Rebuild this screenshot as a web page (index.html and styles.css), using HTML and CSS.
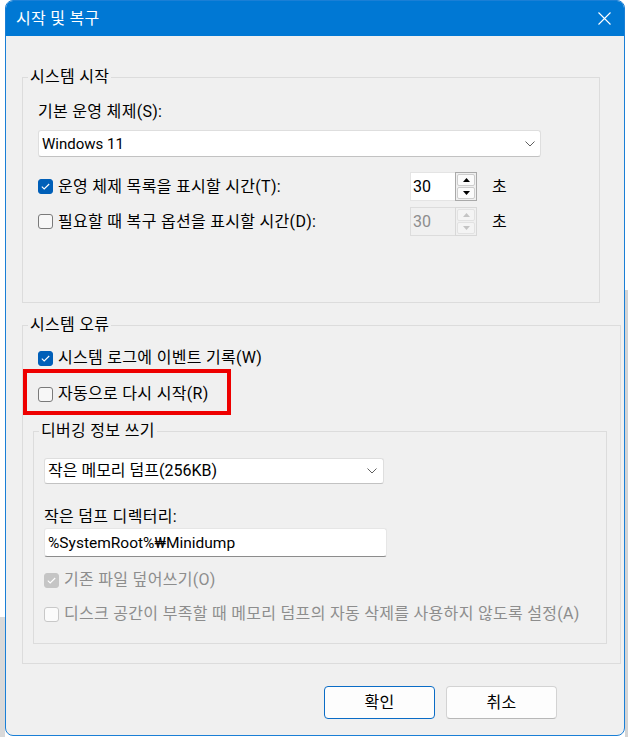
FILE: index.html
```html
<!DOCTYPE html>
<html lang="ko">
<head>
<meta charset="utf-8">
<title>시작 및 복구</title>
<link rel="stylesheet" href="styles.css">
</head>
<body>
<div class="window">
  <div class="titlebar">
    <span class="title">시작 및 복구</span>
    <svg class="close" width="13" height="13" viewBox="0 0 13 13"><path d="M0.5 0.5 L12.5 12.5 M12.5 0.5 L0.5 12.5" stroke="#fff" stroke-width="1.1" fill="none"/></svg>
  </div>

  <div class="content">
    <fieldset class="group g1">
      <legend>시스템 시작</legend>
      <div class="gbody g1-body">
        <div class="label first-label">기본 운영 체제(S):</div>
        <div class="select sel1">
          <span class="latin">Windows 11</span>
          <svg width="10" height="6" viewBox="0 0 10 6"><path d="M0.5 0.5 L5 5 L9.5 0.5" stroke="#5f5f5f" stroke-width="1" fill="none"/></svg>
        </div>
        <div class="timerow tr1">
          <div class="check">
            <span class="box checked"><svg width="15" height="15" viewBox="0 0 15 15"><path d="M3.8 7.6 L6.2 10 L11.2 5" stroke="#fff" stroke-width="1.1" fill="none"/></svg></span>
            <span>운영 체제 목록을 표시할 시간(T):</span>
          </div>
          <div class="spin">
            <span class="spin-val">30</span>
            <div class="spin-btns">
              <div class="sb"><svg width="7" height="4" viewBox="0 0 7 4"><path d="M0 4 L3.5 0 L7 4Z" fill="#000"/></svg></div>
              <div class="sb"><svg width="7" height="4" viewBox="0 0 7 4"><path d="M0 0 L7 0 L3.5 4Z" fill="#000"/></svg></div>
            </div>
          </div>
          <span class="unit">초</span>
        </div>
        <div class="timerow tr2">
          <div class="check">
            <span class="box"></span>
            <span>필요할 때 복구 옵션을 표시할 시간(D):</span>
          </div>
          <div class="spin disabled">
            <span class="spin-val">30</span>
            <div class="spin-btns">
              <div class="sb"><svg width="7" height="4" viewBox="0 0 7 4"><path d="M0 4 L3.5 0 L7 4Z" fill="#c4c4c4"/></svg></div>
              <div class="sb"><svg width="7" height="4" viewBox="0 0 7 4"><path d="M0 0 L7 0 L3.5 4Z" fill="#c4c4c4"/></svg></div>
            </div>
          </div>
          <span class="unit">초</span>
        </div>
      </div>
    </fieldset>

    <fieldset class="group g2">
      <legend>시스템 오류</legend>
      <div class="gbody g2-body">
        <div class="check row rw">
          <span class="box checked"><svg width="15" height="15" viewBox="0 0 15 15"><path d="M3.8 7.6 L6.2 10 L11.2 5" stroke="#fff" stroke-width="1.1" fill="none"/></svg></span>
          <span>시스템 로그에 이벤트 기록(W)</span>
        </div>
        <div class="check row rr">
          <span class="box"></span>
          <span>자동으로 다시 시작(R)</span>
          <span class="highlight"></span>
        </div>

        <fieldset class="group g3">
          <legend>디버깅 정보 쓰기</legend>
          <div class="gbody g3-body">
            <div class="select sel2">
              <span>작은 메모리 덤프(256KB)</span>
              <svg width="10" height="6" viewBox="0 0 10 6"><path d="M0.5 0.5 L5 5 L9.5 0.5" stroke="#5f5f5f" stroke-width="1" fill="none"/></svg>
            </div>
            <div class="label dir-label">작은 덤프 디렉터리:</div>
            <div class="textin">%SystemRoot%₩Minidump</div>
            <div class="check row ro disabled">
              <span class="box checked"><svg width="15" height="15" viewBox="0 0 15 15"><path d="M3.8 7.6 L6.2 10 L11.2 5" stroke="#fff" stroke-width="1.1" fill="none"/></svg></span>
              <span>기존 파일 덮어쓰기(O)</span>
            </div>
            <div class="check row ra disabled">
              <span class="box"></span>
              <span>디스크 공간이 부족할 때 메모리 덤프의 자동 삭제를 사용하지 않도록 설정(A)</span>
            </div>
          </div>
        </fieldset>
      </div>
    </fieldset>

    <div class="buttons">
      <div class="btn primary">확인</div>
      <div class="btn">취소</div>
    </div>
  </div>
</div>
</body>
</html>
```

FILE: styles.css
```css
* { box-sizing: border-box; }
html, body { margin: 0; padding: 0; }
body {
  width: 628px;
  height: 737px;
  overflow: hidden;
  font-family: Roboto, "Noto Sans CJK KR", sans-serif;
  font-size: 16px;
  line-height: 20px;
  letter-spacing: 0.3px;
  color: #000;
  background:
    linear-gradient(#d4d4d4, #d4d4d4) right 0 top 290px / 3px 100% no-repeat,
    linear-gradient(#d9d9d9, #d9d9d9) left 0 top 617px / 5px 100% no-repeat,
    #ffffff;
}

.window {
  margin-left: 5px;
  width: 620px;
  height: 736px;
  border: 1px solid #1a7fd6;
  border-radius: 8px;
  background: #f0f0f0;
  overflow: hidden;
  display: flex;
  flex-direction: column;
}

.titlebar {
  height: 35px;
  flex: none;
  background: #0078d4;
  color: #fff;
  display: flex;
  align-items: center;
  justify-content: space-between;
  padding: 0 13px 0 10px;
}
.close { display: block; }

.content {
  padding-left: 16px;
}

.group {
  margin: 0;
  padding: 0;
  border: 1px solid #dcdcdc;
  min-inline-size: 0;
}
.group legend {
  padding: 0 2px;
  margin-left: 5px;
  line-height: 20px;
}

.g1 { margin-top: 31px; width: 578px; }
.g1-body { padding: 15px 0 66px 15px; }

.label { height: 20px; white-space: nowrap; }

.select {
  display: flex;
  align-items: center;
  justify-content: space-between;
  background: #fff;
  border: 1px solid #dedede;
  border-bottom-color: #c2c2c2;
  border-radius: 3px;
  white-space: nowrap;
}
.select svg { display: block; }
.sel1 { margin-top: 8px; width: 503px; height: 27px; padding: 0 5px 0 3px; }
.latin { font-size: 15px; letter-spacing: 0; }

.timerow {
  display: grid;
  grid-template-columns: 372px 67px auto;
  align-items: center;
  height: 29px;
}
.tr1 { margin-top: 15px; }
.tr2 { margin-top: 6px; }
.unit { margin-left: 15px; }

.check {
  display: flex;
  align-items: center;
  gap: 5px;
  white-space: nowrap;
}
.row { height: 20px; }

.box {
  flex: none;
  width: 15px;
  height: 15px;
  border-radius: 3px;
  border: 1px solid #7a7a7a;
  background: #f7f7f7;
  display: block;
  position: relative;
}
.box svg { position: absolute; left: -1px; top: -1px; }
.box.checked { background: #005fb8; border-color: #005fb8; }
.disabled { color: #8d8d8d; }
.disabled .box { border-color: #c8c8c8; background: #fbfbfb; }
.disabled .box.checked { background: #c5c5c5; border-color: #c5c5c5; }

.spin {
  display: flex;
  height: 29px;
  width: 67px;
}
.spin-val {
  flex: 1;
  background: #fff;
  border: 1px solid #e4e4e4;
  border-right: 0;
  padding-left: 2px;
  display: flex;
  align-items: center;
  letter-spacing: 0;
}
.spin-btns {
  width: 22px;
  border: 1px solid #a9a9a9;
  background: #f0f0f0;
  display: flex;
  flex-direction: column;
  gap: 1px;
  padding: 1px;
}
.sb {
  flex: 1;
  background: #fbfbfb;
  border: 1px solid #cdcdcd;
  border-radius: 2px;
  display: flex;
  align-items: center;
  justify-content: center;
}
.sb svg { display: block; }
.spin.disabled .spin-val { background: #f0f0f0; border-color: #dcdcdc; }
.spin.disabled .spin-btns { border-color: #d8d8d8; }
.spin.disabled .sb { background: #f4f4f4; border-color: #e2e2e2; }

.g2 { margin-top: 12px; width: 599px; }
.g2-body { padding: 13px 0 19px 10px; }
.g2-body > .row { margin-left: 5px; }
.rr { margin-top: 16px; position: relative; }
.highlight {
  position: absolute;
  left: -15px;
  top: -15px;
  width: 208px;
  height: 46px;
  border: 4px solid #ee0000;
}

.g3 { margin-top: 17px; width: 574px; }
.g3-body { padding: 17px 0 19px 10px; }
.sel2 { width: 340px; height: 26px; padding: 0 6px 0 3px; letter-spacing: 0; }
.dir-label { margin-top: 23px; }
.textin {
  margin-top: 1px;
  width: 343px;
  height: 29px;
  background: #fff;
  border: 1px solid #e6e6e6;
  border-bottom-color: #8c8c8c;
  border-radius: 3px;
  padding-left: 3px;
  display: flex;
  align-items: center;
  white-space: nowrap;
  font-size: 15.5px;
  letter-spacing: 0;
}
.ro { margin-top: 13px; }
.ra { margin-top: 14px; }

.buttons {
  display: flex;
  justify-content: flex-end;
  gap: 11px;
  padding-right: 67px;
  margin-top: 22px;
}
.btn {
  width: 111px;
  height: 33px;
  border-radius: 4px;
  background: #fdfdfd;
  border: 1px solid #d3d3d3;
  border-bottom-color: #b8b8b8;
  display: flex;
  align-items: center;
  justify-content: center;
}
.btn.primary { border: 1px solid #0a6cc6; }
```
